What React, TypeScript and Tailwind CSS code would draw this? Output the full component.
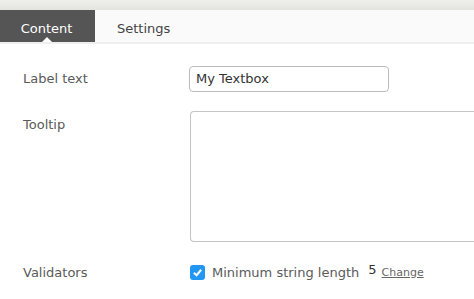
import React from "react";

export default function App() {
  return (
    <div className="w-[474px] h-[299px] bg-white overflow-hidden relative text-[13px] text-[#5a5a5a]" style={{ fontFamily: '"DejaVu Sans", Verdana, sans-serif' }}>
      <div className="h-[10px] bg-gradient-to-b from-[#efefec] to-[#e3e3e0]" />
      <div className="h-[34px] flex bg-[#fafafa] border-b-2 border-[#efefef]">
        <div className="relative w-[95px] h-full bg-[#555] text-white flex items-center justify-center pt-[5px] pr-[2px]">
          Content
          <div className="absolute bottom-0 left-[42px] w-0 h-0 border-l-[5px] border-r-[5px] border-b-[5px] border-l-transparent border-r-transparent border-b-white" />
        </div>
        <div className="h-full flex items-center pl-[22px] pt-[5px] text-[#444]">Settings</div>
      </div>
      <div className="pl-[23px] pt-[22px]">
        <div className="flex items-center h-[26px]">
          <div className="w-[166px]">Label text</div>
          <div className="w-[200px] h-[26px] border border-[#bbb] rounded-[4px] flex items-center px-[6px] text-[#333]">My Textbox</div>
        </div>
        <div className="flex mt-[19px]">
          <div className="w-[167px] pt-[4px]">Tooltip</div>
          <div className="flex-1 h-[131px] border border-[#c4c4c4] border-r-0 rounded-l-[4px]" />
        </div>
        <div className="flex items-center mt-[21px]">
          <div className="w-[167px]">Validators</div>
          <div className="w-[15px] h-[15px] rounded-[3px] bg-[#2196f3] flex items-center justify-center">
            <svg width="11" height="11" viewBox="0 0 12 12"><path d="M2 6.2 L5 9 L10 3" stroke="white" strokeWidth="2.2" fill="none" /></svg>
          </div>
          <span className="ml-[7px]">Minimum string length</span>
          <span className="ml-[9px] text-[#333] relative -top-[3px]">5</span>
          <span className="ml-[5px] text-[11px] underline text-[#666]">Change</span>
        </div>
      </div>
    </div>
  );
}
